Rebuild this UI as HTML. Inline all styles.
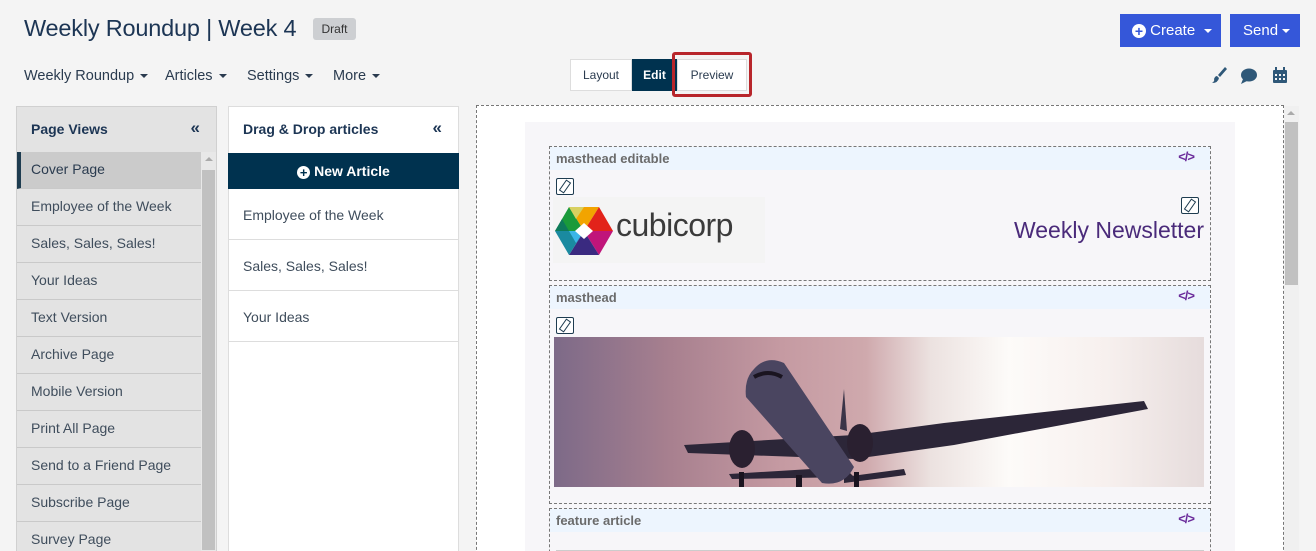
<!DOCTYPE html>
<html><head><meta charset="utf-8"><style>
*{box-sizing:border-box;margin:0;padding:0}
html,body{width:1316px;height:551px;overflow:hidden}
body{background:#f4f4f4;font-family:"Liberation Sans",sans-serif;position:relative;color:#22374f}
.a{position:absolute}
.caret{display:inline-block;width:0;height:0;border-left:4px solid transparent;border-right:4px solid transparent;border-top:4px solid currentColor;vertical-align:middle;margin-left:6px}
.nav{top:68px;font-size:14.5px;color:#2a3b4f}
.lp{left:16px;top:106px;width:201px;height:445px;background:#e3e3e3;border:1px solid #d0d0d0;border-bottom:0;overflow:hidden}
.li{position:absolute;left:0;width:184px;height:37px;border-bottom:1px solid #c9c9c9;padding:9px 0 0 14px;font-size:14px;color:#3f4d5c}
.mi{position:absolute;left:0;width:230px;height:51px;border-bottom:1px solid #ddd;padding:18px 0 0 14px;font-size:14px;color:#3f4d5c}
.blk{position:absolute;left:549px;width:662px;border:1px dashed #777}
.bh{height:23px;background:#edf5fe;font-size:13px;font-weight:bold;color:#6b6b6b;padding:4px 0 0 6px;position:relative}
.code{position:absolute;right:16px;top:2px;color:#6a2a9a;font-weight:bold;font-size:13px;letter-spacing:-1px}
.ed{position:absolute;width:18px;height:17px;border:1.5px solid #1e3c50;border-radius:2px;background:#fff}
.ed:after{content:"";position:absolute;left:5px;top:1px;width:4px;height:11px;border:1.3px solid #1e3c50;transform:rotate(35deg)}
#clip{position:absolute;left:0;top:0;width:1316px;height:551px;overflow:hidden}
</style></head><body><div id="clip">
<div class="a" style="left:24px;top:15px;font-size:23.5px;color:#1c3554;letter-spacing:-0.2px">Weekly Roundup | Week 4</div>
<div class="a" style="left:313px;top:18px;width:43px;height:22px;background:#cdcfd2;border-radius:3px;font-size:12px;color:#333;text-align:center;line-height:22px">Draft</div>
<div class="a nav" style="left:24px">Weekly Roundup<span class="caret"></span></div>
<div class="a nav" style="left:165px">Articles<span class="caret"></span></div>
<div class="a nav" style="left:247px">Settings<span class="caret"></span></div>
<div class="a nav" style="left:333px">More<span class="caret"></span></div>

<div class="a" style="left:570px;top:59px;width:62px;height:32px;background:#fff;border:1px solid #ddd;font-size:12px;text-align:center;line-height:30px;color:#2a3b4f">Layout</div>
<div class="a" style="left:632px;top:59px;width:45px;height:32px;background:#00324f;font-size:12px;font-weight:bold;color:#fff;text-align:center;line-height:32px">Edit</div>
<div class="a" style="left:672px;top:52px;width:80px;height:45px;border:3px solid #b8262b;border-radius:3px"></div>
<div class="a" style="left:677px;top:59px;width:70px;height:32px;background:#fff;border:1px solid #ddd;font-size:12px;text-align:center;line-height:30px;color:#2a3b4f">Preview</div>

<div class="a" style="left:1120px;top:14px;width:101px;height:33px;background:#3557d9;color:#fff;font-size:15px;line-height:33px;padding-left:12px"><span style="display:inline-block;width:14px;height:14px;border-radius:50%;background:#fff;color:#3557d9;font-weight:bold;font-size:14px;line-height:14px;text-align:center;vertical-align:-1px">+</span> Create<span class="caret" style="margin-left:9px"></span></div>
<div class="a" style="left:1230px;top:14px;width:70px;height:33px;background:#3557d9;color:#fff;font-size:15px;line-height:33px;padding-left:13px">Send<span class="caret" style="margin-left:4px"></span></div>
<svg class="a" style="left:1208px;top:66px" width="90" height="20" viewBox="0 0 90 20">
<path d="M17 1 L19 3 L12 11 L10 9 Z" fill="#2f5878"/><path d="M9 10 L11 12 Q10 17 4 17 Q7 15 6 13 Q7 10 9 10Z" fill="#2f5878"/>
<ellipse cx="41" cy="9" rx="8" ry="6.5" fill="#2f5878"/><path d="M35 13 L33 18 L39 15Z" fill="#2f5878"/>
<rect x="65" y="4" width="14" height="13" rx="1" fill="#2f5878"/><rect x="67" y="1" width="2" height="4" fill="#2f5878"/><rect x="75" y="1" width="2" height="4" fill="#2f5878"/>
<g fill="#f4f4f4"><rect x="67" y="8" width="2" height="2"/><rect x="71" y="8" width="2" height="2"/><rect x="75" y="8" width="2" height="2"/><rect x="67" y="12" width="2" height="2"/><rect x="71" y="12" width="2" height="2"/><rect x="75" y="12" width="2" height="2"/></g>
</svg>

<div class="a lp">
<div style="position:absolute;left:14px;top:14px;font-weight:bold;font-size:14px;color:#1c3554">Page Views</div>
<div style="position:absolute;right:16px;top:11px;font-weight:bold;font-size:17px;color:#1c3554">«</div>
<div class="li" style="top:45px;background:#cbcbcb;border-left:4px solid #1e3c50;padding-left:10px;color:#2a3b4f">Cover Page</div>
<div class="li" style="top:82px">Employee of the Week</div>
<div class="li" style="top:119px">Sales, Sales, Sales!</div>
<div class="li" style="top:156px">Your Ideas</div>
<div class="li" style="top:193px">Text Version</div>
<div class="li" style="top:230px">Archive Page</div>
<div class="li" style="top:267px">Mobile Version</div>
<div class="li" style="top:304px">Print All Page</div>
<div class="li" style="top:341px">Send to a Friend Page</div>
<div class="li" style="top:378px">Subscribe Page</div>
<div class="li" style="top:415px">Survey Page</div>
<div style="position:absolute;left:184px;top:45px;width:15px;height:400px;background:#e8e8e8"></div>
<div style="position:absolute;left:185px;top:63px;width:13px;height:380px;background:#c1c1c1"></div>
<div style="position:absolute;left:188px;top:50px;border-left:4px solid transparent;border-right:4px solid transparent;border-bottom:4px solid #aaa"></div>
</div>

<div class="a" style="left:228px;top:106px;width:231px;height:445px;background:#fff;border:1px solid #ddd;border-bottom:0">
<div style="position:absolute;left:14px;top:14px;font-weight:bold;font-size:14px;color:#1c3554">Drag &amp; Drop articles</div>
<div style="position:absolute;right:16px;top:11px;font-weight:bold;font-size:17px;color:#1c3554">«</div>
<div style="position:absolute;left:-1px;top:46px;width:231px;height:36px;background:#00324f;color:#fff;font-size:14px;font-weight:bold;text-align:center;line-height:36px"><span style="display:inline-block;width:13px;height:13px;border-radius:50%;background:#fff;color:#00324f;font-size:13px;line-height:13px;vertical-align:-1px">+</span> New Article</div>
<div class="mi" style="top:82px">Employee of the Week</div>
<div class="mi" style="top:133px">Sales, Sales, Sales!</div>
<div class="mi" style="top:184px">Your Ideas</div>
</div>

<div class="a" style="left:476px;top:105px;width:808px;height:460px;background:#fff;border:1px dashed #777"></div>
<div class="a" style="left:1284px;top:106px;width:15px;height:445px;background:#f0f0f0"></div>
<div class="a" style="left:1285px;top:122px;width:13px;height:163px;background:#c1c1c1"></div>
<div class="a" style="left:1287px;top:111px;border-left:4px solid transparent;border-right:4px solid transparent;border-bottom:4px solid #aaa"></div>
<div class="a" style="left:525px;top:122px;width:710px;height:429px;background:#f7f6f9"></div>

<div class="blk" style="top:146px;height:135px">
<div class="bh">masthead editable<span class="code">&lt;/&gt;</span></div>
<div class="ed" style="left:6px;top:31px"></div>
<div class="ed" style="left:631px;top:50px"></div>
<div style="position:absolute;left:3px;top:50px;width:212px;height:66px;background:#f4f4f4"></div>
<svg style="position:absolute;left:5px;top:60px" width="58" height="48" viewBox="0 0 58 48">
<polygon points="29,24 14,0 44,0" fill="#f2a400"/>
<polygon points="29,24 44,0 58,24" fill="#e2231a"/>
<polygon points="29,24 58,24 44,48" fill="#c0157a"/>
<polygon points="29,24 44,48 14,48" fill="#3a2a80"/>
<polygon points="29,24 14,48 0,24" fill="#1a8aa0"/>
<polygon points="29,24 0,24 14,0" fill="#1a9a3a"/>
<polygon points="14,0 29,0 21,12" fill="#d8d060"/>
<polygon points="0,24 7,12 14,24" fill="#0e7a5a"/>
<polygon points="14,24 29,24 21,36" fill="#3bb6e8"/>
<polygon points="29,16 38,24 29,32 20,24" fill="#fff"/>
</svg>
<div style="position:absolute;left:66px;top:60px;font-size:32px;color:#3b3b3b;letter-spacing:-0.5px">cubicorp</div>
<div style="position:absolute;right:6px;top:70px;font-size:23px;color:#4a2a7a">Weekly Newsletter</div>
</div>

<div class="blk" style="top:285px;height:219px">
<div class="bh">masthead<span class="code">&lt;/&gt;</span></div>
<div class="ed" style="left:6px;top:31px"></div>
<div style="position:absolute;left:4px;top:51px;width:650px;height:150px;overflow:hidden;background:linear-gradient(90deg,#7d6a88 0%,#a8808f 18%,#c59aa2 35%,#cfa9ad 48%,#ece2e0 58%,#fdfbf9 70%,#f7f0ee 85%,#e6dcdc 100%)">
<svg style="position:absolute;left:0;top:0" width="650" height="150" viewBox="0 0 650 150">
<path d="M130 108 L300 98 L390 86 L590 64 L594 72 L400 108 L300 122 L134 116Z" fill="#2c2638"/>
<path d="M175 137 L290 130 L300 140 L178 142Z" fill="#2c2638"/>
<path d="M290 140 L350 132 L352 138 L290 146Z" fill="#2c2638"/>
<path d="M286 92 L290 52 L293 94Z" fill="#3a3448"/>
<path d="M200 32 Q212 18 230 26 L300 130 Q290 150 268 146 L192 60 Q190 42 200 32Z" fill="#4a4560"/>
<path d="M200 40 Q214 32 228 40" stroke="#1a1420" stroke-width="4" fill="none"/>
<ellipse cx="188" cy="112" rx="13" ry="19" fill="#2a2030"/>
<ellipse cx="306" cy="106" rx="13" ry="19" fill="#2a2030"/>
<rect x="185" y="135" width="5" height="15" fill="#1a1420"/><rect x="242" y="138" width="6" height="12" fill="#1a1420"/><rect x="300" y="135" width="5" height="15" fill="#1a1420"/>
</svg></div>
</div>

<div class="blk" style="top:508px;height:60px">
<div class="bh">feature article<span class="code">&lt;/&gt;</span></div>
<div style="position:absolute;left:6px;top:41px;width:648px;height:1px;background:#ccc"></div>
</div>
</div></body></html>
